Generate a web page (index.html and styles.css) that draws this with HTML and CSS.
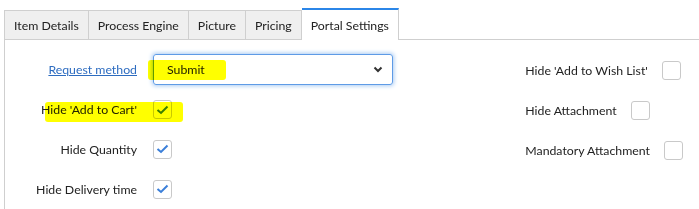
FILE: index.html
```html
<!DOCTYPE html>
<html>
<head>
<meta charset="utf-8">
<link rel="stylesheet" href="styles.css">
</head>
<body>
<div class="tabs">
  <div class="tab">Item Details</div>
  <div class="tab">Process Engine</div>
  <div class="tab">Picture</div>
  <div class="tab">Pricing</div>
  <div class="tab active">Portal Settings</div>
  <div class="tab-fill"></div>
</div>
<div class="panel">
  <div class="col left">
    <div class="row">
      <a class="label link" href="#">Request method</a>
      <div class="select">
        <span class="select-text">Submit</span>
        <svg class="chev" width="10" height="7" viewBox="0 0 10 7"><path d="M1.5 1.5 L5 5 L8.5 1.5" fill="none" stroke="#333" stroke-width="2"/></svg>
        <span class="hl hl-select"></span>
      </div>
    </div>
    <div class="row">
      <span class="label">Hide 'Add to Cart'</span>
      <span class="cb checked"><svg width="13" height="10" viewBox="0 0 13 10"><path d="M1.5 5 L5 8 L11.5 1.5" fill="none" stroke="#3b7fd9" stroke-width="2"/></svg></span>
      <span class="hl hl-cart"></span>
    </div>
    <div class="row">
      <span class="label">Hide Quantity</span>
      <span class="cb checked"><svg width="13" height="10" viewBox="0 0 13 10"><path d="M1.5 5 L5 8 L11.5 1.5" fill="none" stroke="#3b7fd9" stroke-width="2"/></svg></span>
    </div>
    <div class="row">
      <span class="label">Hide Delivery time</span>
      <span class="cb checked"><svg width="13" height="10" viewBox="0 0 13 10"><path d="M1.5 5 L5 8 L11.5 1.5" fill="none" stroke="#3b7fd9" stroke-width="2"/></svg></span>
    </div>
  </div>
  <div class="col right">
    <div class="row">
      <span class="label">Hide 'Add to Wish List'</span>
      <span class="cb"></span>
    </div>
    <div class="row">
      <span class="label">Hide Attachment</span>
      <span class="cb"></span>
    </div>
    <div class="row">
      <span class="label">Mandatory Attachment</span>
      <span class="cb"></span>
    </div>
  </div>
</div>
</body>
</html>
```
FILE: styles.css
```css
html, body {
  margin: 0;
  padding: 0;
  background: #fff;
}
body {
  font-family: Lato, "Noto Sans", sans-serif;
  font-size: 12.3px;
  color: #222;
  width: 699px;
  height: 209px;
  overflow: hidden;
}
.tabs {
  display: flex;
  align-items: flex-end;
  padding-top: 8px;
  padding-left: 4px;
  height: 32px;
}
.tab {
  box-sizing: border-box;
  height: 30px;
  padding: 0 9px;
  display: flex;
  align-items: center;
  background: #efefef;
  border: 1px solid #cfcfcf;
  border-left: none;
  white-space: nowrap;
}
.tab:first-child {
  border-left: 1px solid #cfcfcf;
}
.tab.active {
  height: 32px;
  background: #fff;
  border-top: 2px solid #2b86e8;
  border-bottom: none;
  padding-top: 1px;
}
.tab-fill {
  flex: 1;
  height: 30px;
  box-sizing: border-box;
  border-bottom: 1px solid #cfcfcf;
}
.panel {
  margin-left: 4px;
  border-left: 1px solid #cfcfcf;
  display: flex;
  justify-content: space-between;
  padding-top: 10px;
  padding-right: 16px;
  height: 159px;
}
.col {
  display: flex;
  flex-direction: column;
}
.row {
  position: relative;
  display: flex;
  align-items: center;
  height: 40px;
}
.left .label {
  width: 132px;
  text-align: right;
  margin-right: 16px;
}
.right .label {
  text-align: right;
  margin-right: 14px;
}
.link {
  color: #2d6cc0;
  text-decoration: underline;
}
.select {
  position: relative;
  box-sizing: border-box;
  width: 240px;
  height: 31px;
  border: 1px solid #5e9be6;
  border-radius: 3px;
  box-shadow: 0 0 4px 1px #a9cbf3;
  display: flex;
  align-items: center;
  padding-left: 13px;
  padding-right: 9px;
}
.select-text {
  flex: 1;
}
.cb {
  box-sizing: border-box;
  width: 19px;
  height: 19px;
  border: 1px solid #c9c9c9;
  border-radius: 3px;
  display: flex;
  align-items: center;
  justify-content: center;
  background: #fff;
}
.hl {
  position: absolute;
  background: #ffff00;
  mix-blend-mode: multiply;
  border-radius: 3px;
}
.hl-select {
  left: -6px;
  top: 5px;
  width: 78px;
  height: 20px;
}
.hl-cart {
  left: 40px;
  top: 12px;
  width: 138px;
  height: 20px;
}
```
